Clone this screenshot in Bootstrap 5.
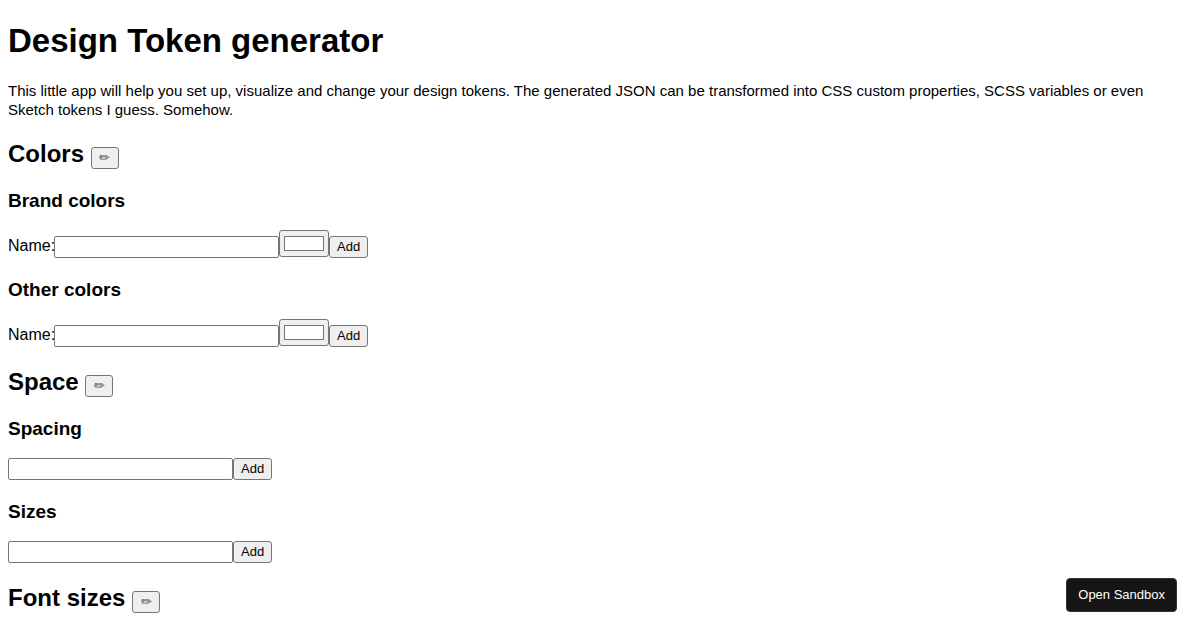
<!DOCTYPE html>
<html lang="en">
<head>
<meta charset="utf-8">
<meta name="viewport" content="width=device-width, initial-scale=1">
<title>Design Token generator</title>
<link href="https://cdn.jsdelivr.net/npm/bootstrap@5.3.0/dist/css/bootstrap.min.css" rel="stylesheet">
<style>
body{font-family:"Liberation Sans",Arial,sans-serif;font-size:16px;line-height:19px;color:#000}
.page{padding:0 8px}
h1,h2,h3{font-weight:700;color:#000}
h1{font-size:33px;line-height:37px;margin:22px 0}
h2{font-size:24px;line-height:28px;margin:20px 0 21px}
h3{font-size:19px;line-height:21px;margin:20px 0 19px}
.intro{font-size:15px;margin:0 0 21px}
form{padding-bottom:1px}
form label{padding-bottom:3px;width:46px}
.tool{font-size:13px;line-height:16px;color:#000;background:#efefef;border:1px solid #767676;border-radius:3px;padding:2px 7px;height:22px}
.tool:hover{background:#e5e5e5}
.edit{width:28px;padding:0;color:#555}
.field{width:225px;height:22px;border:1px solid #767676;border-radius:2px;padding:1px 2px;font-size:13px}
.swatch{width:50px;height:27px;margin-bottom:1px;border:1px solid #767676;border-radius:3px;background:#efefef;padding:1px 2px}
.swatch::-webkit-color-swatch-wrapper{padding:4px 2px}
.swatch::-webkit-color-swatch{border:1px solid #767676;border-radius:0}
.sandbox{right:23px;bottom:18px;background:#151515;color:#fff;border:1px solid #343434;border-radius:4px;font-size:13px;line-height:16px;padding:8px 11px}
</style>
</head>
<body>
<main class="page">
<h1>Design Token generator</h1>
<p class="intro">This little app will help you set up, visualize and change your design tokens. The generated JSON can be transformed into CSS custom properties, SCSS variables or even Sketch tokens I guess. Somehow.</p>
<section>
<h2>Colors <button type="button" class="tool edit" aria-label="Edit colors">✏</button></h2>
<h3>Brand colors</h3>
<form class="d-flex align-items-end"><label for="brand">Name:</label><input id="brand" class="field" type="text"><input class="swatch" type="color" value="#ffffff" aria-label="Brand color"><button type="button" class="tool">Add</button></form>
<h3>Other colors</h3>
<form class="d-flex align-items-end"><label for="other">Name:</label><input id="other" class="field" type="text"><input class="swatch" type="color" value="#ffffff" aria-label="Other color"><button type="button" class="tool">Add</button></form>
</section>
<section>
<h2>Space <button type="button" class="tool edit" aria-label="Edit space">✏</button></h2>
<h3>Spacing</h3>
<form class="d-flex align-items-end"><input class="field" type="text" aria-label="Spacing"><button type="button" class="tool">Add</button></form>
<h3>Sizes</h3>
<form class="d-flex align-items-end"><input class="field" type="text" aria-label="Size"><button type="button" class="tool">Add</button></form>
</section>
<section>
<h2>Font sizes <button type="button" class="tool edit" aria-label="Edit font sizes">✏</button></h2>
</section>
</main>
<button type="button" class="sandbox position-fixed">Open Sandbox</button>
<script src="https://cdn.jsdelivr.net/npm/bootstrap@5.3.0/dist/js/bootstrap.bundle.min.js"></script>
</body>
</html>
